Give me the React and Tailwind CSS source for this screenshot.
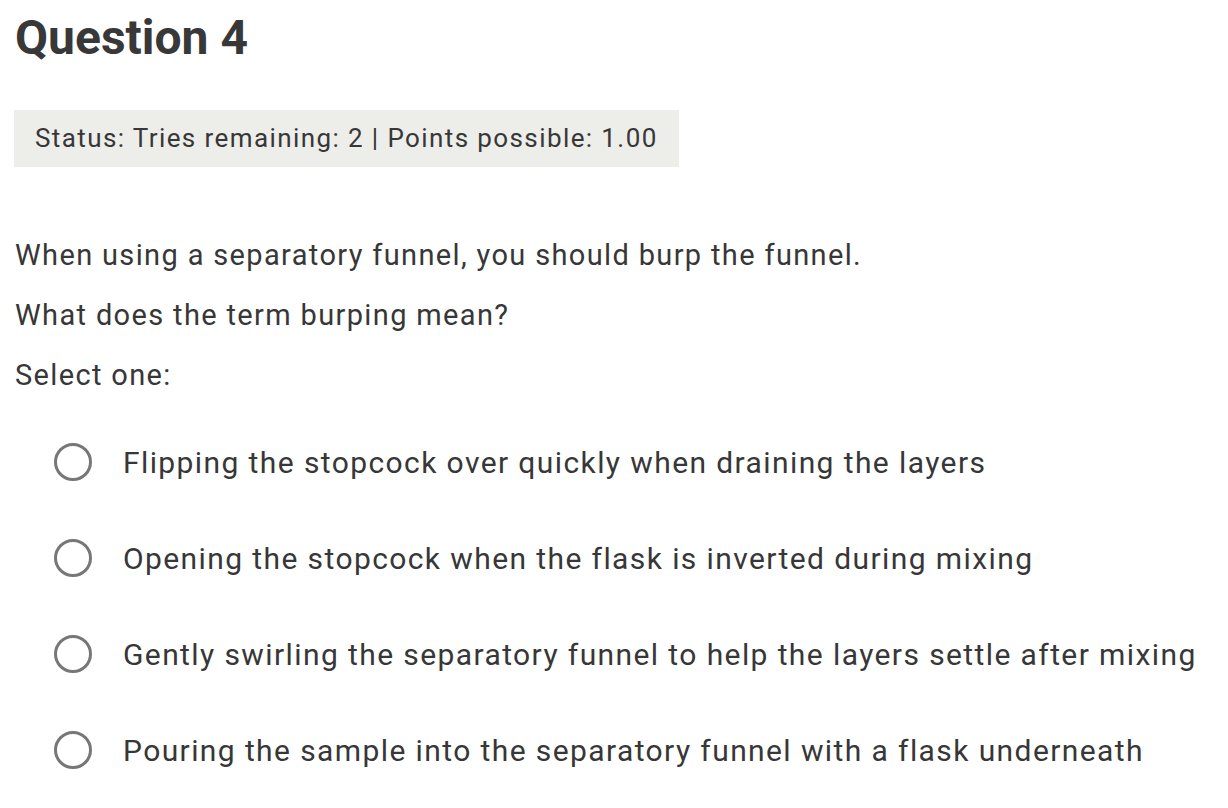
import React from 'react';

const options = [
  'Flipping the stopcock over quickly when draining the layers',
  'Opening the stopcock when the flask is inverted during mixing',
  'Gently swirling the separatory funnel to help the layers settle after mixing',
  'Pouring the sample into the separatory funnel with a flask underneath',
];

const App = () => {
  return (
    <div className="w-[1228px] h-[808px] bg-white text-[#373737] overflow-hidden" style={{ fontFamily: 'Roboto, sans-serif' }}>
      <div className="pl-[15px] pt-[10px]">
        <h1 className="text-[48px] font-bold leading-[56px] text-[#383838]">Question 4</h1>
        <div className="mt-[44px] -ml-px inline-block bg-[#ededea] px-[21px] py-[12px] text-[26px] leading-[33px] tracking-[1.4px]">
          Status: Tries remaining: 2 | Points possible: 1.00
        </div>
        <div className="mt-[58px] text-[29px] leading-[60px] tracking-[1.35px]">
          <p>When using a separatory funnel, you should burp the funnel.</p>
          <p>What does the term burping mean?</p>
          <p>Select one:</p>
        </div>
        <div className="mt-[36px] flex flex-col gap-[54px]">
          {options.map((o) => (
            <label key={o} className="flex items-center h-[42px]">
              <span className="ml-[39px] w-[38px] h-[38px] rounded-full border-[3.5px] border-[#777777] shrink-0" />
              <span className="ml-[31px] text-[30px] tracking-[1.4px]">{o}</span>
            </label>
          ))}
        </div>
      </div>
    </div>
  );
};

export default App;
